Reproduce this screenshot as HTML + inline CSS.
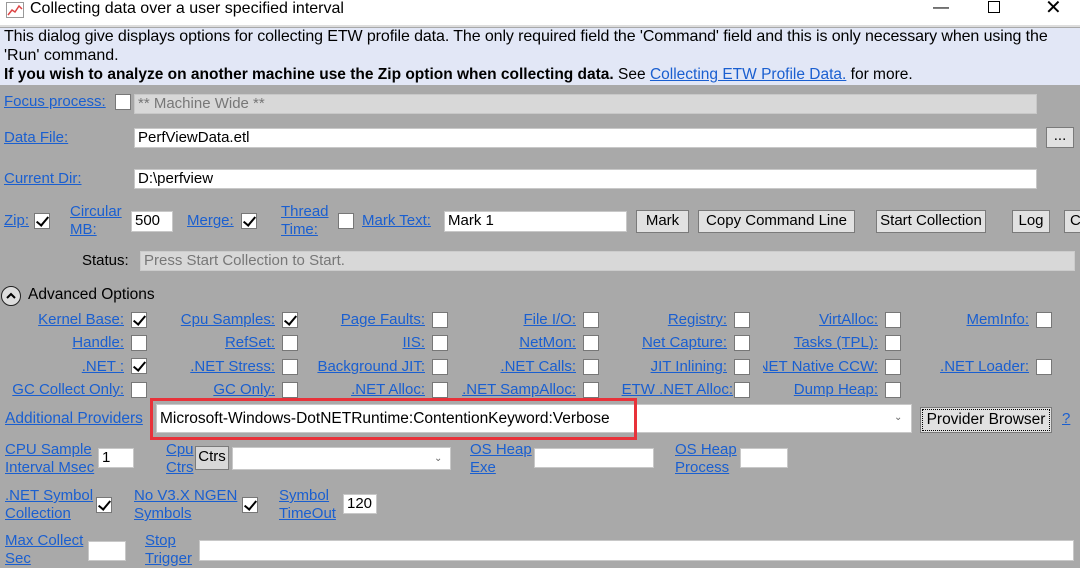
<!DOCTYPE html>
<html><head><meta charset="utf-8"><style>
*{margin:0;padding:0;box-sizing:border-box}
body{width:1080px;height:565px;overflow:hidden;background:#a9a9a9;font-family:"Liberation Sans",sans-serif;font-size:15px;color:#000;position:relative}
.a{position:absolute;white-space:nowrap;line-height:18px}
.l{color:#1a5fd0;text-decoration:underline}
.in{position:absolute;background:#fff;border:1px solid #c8c8c8;font-size:15px;line-height:17px;padding-left:3px;white-space:nowrap;overflow:hidden}
.cb{position:absolute;width:16px;height:16px;background:#fff;border:1px solid #777}
.cb.c::after{content:"";position:absolute;left:4px;top:0px;width:5px;height:10px;border:solid #000;border-width:0 2px 2px 0;transform:rotate(40deg)}
.bt{position:absolute;background:#e1e1e1;border:1px solid #7a7a7a;text-align:center;font-size:15px;line-height:20px;white-space:nowrap;overflow:hidden}
.r{text-align:right}
</style></head><body>
<div style="position:absolute;left:0;top:0;width:1080px;height:27px;background:#fff;border-bottom:2px solid #ddd"></div>
<svg class="a" style="left:6px;top:2px" width="18" height="16"><rect x="0.5" y="0.5" width="17" height="15" fill="#fff" stroke="#999"/><polyline points="2,13 6,8 9,10 13,4 16,7" fill="none" stroke="#d44" stroke-width="1.5"/></svg>
<div class="a" style="left:30px;top:0;font-size:16px;line-height:18px">Collecting data over a user specified interval</div>
<div class="a" style="left:933px;top:0;font-size:16px;line-height:16px">—</div>
<div class="a" style="left:988px;top:1px;width:12px;height:12px;border:1px solid #000"></div>
<div class="a" style="left:1045px;top:-2px;font-size:20px;line-height:20px">✕</div>
<div style="position:absolute;left:0;top:28px;width:1080px;height:57px;background:#e2e7f6"></div>
<div class="a" style="left:4px;top:28px;font-size:16px;letter-spacing:-0.1px">This dialog give displays options for collecting ETW profile data. The only required field the 'Command' field and this is only necessary when using the</div>
<div class="a" style="left:4px;top:47px;font-size:16px">'Run' command.</div>
<div class="a" style="left:4px;top:66px;font-size:15.5px"><b>If you wish to analyze on another machine use the Zip option when collecting data.</b> See <span class="l">Collecting ETW Profile Data.</span> for more.</div>

<div class="a l" style="left:4px;top:93px">Focus process:</div>
<div class="cb" style="left:115px;top:94px"></div>
<div class="in" style="left:134px;top:94px;width:903px;height:20px;background:#d8d8d8;color:#777">** Machine Wide **</div>
<div class="a l" style="left:4px;top:129px">Data File:</div>
<div class="in" style="left:134px;top:128px;width:903px;height:20px">PerfViewData.etl</div>
<div class="bt" style="left:1046px;top:127px;width:28px;height:21px;line-height:16px">...</div>
<div class="a l" style="left:4px;top:170px">Current Dir:</div>
<div class="in" style="left:134px;top:169px;width:903px;height:20px">D:\perfview</div>

<div class="a l" style="left:4px;top:212px">Zip:</div><div class="cb c" style="left:34px;top:213px"></div>
<div class="a l" style="left:70px;top:203px">Circular</div><div class="a l" style="left:70px;top:221px">MB:</div>
<div class="in" style="left:131px;top:211px;width:42px;height:21px">500</div>
<div class="a l" style="left:187px;top:212px">Merge:</div><div class="cb c" style="left:241px;top:213px"></div>
<div class="a l" style="left:281px;top:203px">Thread</div><div class="a l" style="left:281px;top:221px">Time:</div>
<div class="cb" style="left:338px;top:213px"></div>
<div class="a l" style="left:362px;top:212px">Mark Text:</div>
<div class="in" style="left:444px;top:211px;width:183px;height:21px">Mark 1</div>
<div class="bt" style="left:636px;top:210px;width:53px;height:23px">Mark</div>
<div class="bt" style="left:698px;top:210px;width:157px;height:23px">Copy Command Line</div>
<div class="bt" style="left:876px;top:210px;width:110px;height:23px">Start Collection</div>
<div class="bt" style="left:1012px;top:210px;width:38px;height:23px">Log</div>
<div class="bt" style="left:1064px;top:210px;width:30px;height:23px;text-align:left;padding-left:5px">C</div>

<div class="a" style="left:82px;top:252px">Status:</div>
<div class="in" style="left:140px;top:251px;width:935px;height:20px;background:#d8d8d8;color:#777;border-color:#ccc">Press Start Collection to Start.</div>

<div class="a" style="left:1px;top:286px;width:20px;height:20px;border:1.5px solid #222;border-radius:50%;background:#ddd"></div>
<svg class="a" style="left:5px;top:291px" width="12" height="10"><polyline points="2,7 6,3 10,7" fill="none" stroke="#000" stroke-width="2"/></svg>
<div class="a" style="left:28px;top:286px;font-size:15.5px">Advanced Options</div>

<div class="a l r" style="right:956px;top:311px">Kernel Base:</div><div class="cb c" style="left:131px;top:312px"></div>
<div class="a l r" style="right:805px;top:311px">Cpu Samples:</div><div class="cb c" style="left:282px;top:312px"></div>
<div class="a l r" style="right:655px;top:311px">Page Faults:</div><div class="cb" style="left:432px;top:312px"></div>
<div class="a l r" style="right:504px;top:311px">File I/O:</div><div class="cb" style="left:583px;top:312px"></div>
<div class="a l r" style="right:353px;top:311px">Registry:</div><div class="cb" style="left:734px;top:312px"></div>
<div class="a l r" style="right:202px;top:311px">VirtAlloc:</div><div class="cb" style="left:885px;top:312px"></div>
<div class="a l r" style="right:51px;top:311px">MemInfo:</div><div class="cb" style="left:1036px;top:312px"></div>

<div class="a l r" style="right:956px;top:334px">Handle:</div><div class="cb" style="left:131px;top:335px"></div>
<div class="a l r" style="right:805px;top:334px">RefSet:</div><div class="cb" style="left:282px;top:335px"></div>
<div class="a l r" style="right:655px;top:334px">IIS:</div><div class="cb" style="left:432px;top:335px"></div>
<div class="a l r" style="right:504px;top:334px">NetMon:</div><div class="cb" style="left:583px;top:335px"></div>
<div class="a l r" style="right:353px;top:334px">Net Capture:</div><div class="cb" style="left:734px;top:335px"></div>
<div class="a l r" style="right:202px;top:334px">Tasks (TPL):</div><div class="cb" style="left:885px;top:335px"></div>

<div class="a l r" style="right:956px;top:358px">.NET :</div><div class="cb c" style="left:131px;top:358px"></div>
<div class="a l r" style="right:805px;top:358px">.NET Stress:</div><div class="cb" style="left:282px;top:359px"></div>
<div class="a l r" style="right:655px;top:358px">Background JIT:</div><div class="cb" style="left:432px;top:359px"></div>
<div class="a l r" style="right:504px;top:358px">.NET Calls:</div><div class="cb" style="left:583px;top:359px"></div>
<div class="a l r" style="right:353px;top:358px">JIT Inlining:</div><div class="cb" style="left:734px;top:359px"></div>
<div class="a" style="left:763px;top:358px;width:115px;height:20px;overflow:hidden"><span class="a l" style="right:0;top:0">.NET Native CCW:</span></div><div class="cb" style="left:885px;top:359px"></div>
<div class="a l r" style="right:51px;top:358px">.NET Loader:</div><div class="cb" style="left:1036px;top:359px"></div>

<div class="a l r" style="right:956px;top:381px">GC Collect Only:</div><div class="cb" style="left:131px;top:382px"></div>
<div class="a l r" style="right:805px;top:381px">GC Only:</div><div class="cb" style="left:282px;top:382px"></div>
<div class="a l r" style="right:655px;top:381px">.NET Alloc:</div><div class="cb" style="left:432px;top:382px"></div>
<div class="a l r" style="right:504px;top:381px">.NET SampAlloc:</div><div class="cb" style="left:583px;top:382px"></div>
<div class="a l r" style="right:347px;top:381px">ETW .NET Alloc:</div><div class="cb" style="left:734px;top:382px"></div>
<div class="a l r" style="right:202px;top:381px">Dump Heap:</div><div class="cb" style="left:885px;top:382px"></div>

<div class="a l" style="left:5px;top:410px;font-size:15.5px">Additional Providers</div>
<div class="in" style="left:156px;top:404px;width:756px;height:29px;line-height:27px;font-size:15.5px">Microsoft-Windows-DotNETRuntime:ContentionKeyword:Verbose</div>
<div class="a" style="left:894px;top:409px;font-size:10px;color:#666">⌄</div>
<div style="position:absolute;left:150px;top:398px;width:487px;height:42px;border:3px solid #e8323a"></div>
<div class="bt" style="left:920px;top:407px;width:132px;height:26px;line-height:24px;font-size:15.5px;outline:1px dotted #000;outline-offset:-3px">Provider Browser</div>
<div class="a l" style="left:1062px;top:410px">?</div>

<div class="a l" style="left:5px;top:441px">CPU Sample</div><div class="a l" style="left:5px;top:459px">Interval Msec</div>
<div class="in" style="left:98px;top:448px;width:36px;height:20px">1</div>
<div class="a l" style="left:166px;top:441px">Cpu</div><div class="a l" style="left:166px;top:459px">Ctrs</div>
<div class="bt" style="left:195px;top:446px;width:34px;height:24px;background:#d8d8d8">Ctrs</div>
<div class="in" style="left:232px;top:447px;width:219px;height:23px"></div>
<div class="a" style="left:434px;top:450px;font-size:10px;color:#666">⌄</div>
<div class="a l" style="left:470px;top:441px">OS Heap</div><div class="a l" style="left:470px;top:459px">Exe</div>
<div class="in" style="left:534px;top:448px;width:120px;height:20px"></div>
<div class="a l" style="left:675px;top:441px">OS Heap</div><div class="a l" style="left:675px;top:459px">Process</div>
<div class="in" style="left:740px;top:448px;width:48px;height:20px"></div>

<div class="a l" style="left:5px;top:487px">.NET Symbol</div><div class="a l" style="left:5px;top:505px">Collection</div>
<div class="cb c" style="left:96px;top:497px"></div>
<div class="a l" style="left:134px;top:487px">No V3.X NGEN</div><div class="a l" style="left:134px;top:505px">Symbols</div>
<div class="cb c" style="left:242px;top:497px"></div>
<div class="a l" style="left:279px;top:487px">Symbol</div><div class="a l" style="left:279px;top:505px">TimeOut</div>
<div class="in" style="left:343px;top:494px;width:34px;height:20px">120</div>

<div class="a l" style="left:5px;top:532px">Max Collect</div><div class="a l" style="left:5px;top:550px">Sec</div>
<div class="in" style="left:88px;top:541px;width:38px;height:20px"></div>
<div class="a l" style="left:145px;top:532px">Stop</div><div class="a l" style="left:145px;top:550px">Trigger</div>
<div class="in" style="left:199px;top:540px;width:875px;height:21px"></div>
</body></html>
